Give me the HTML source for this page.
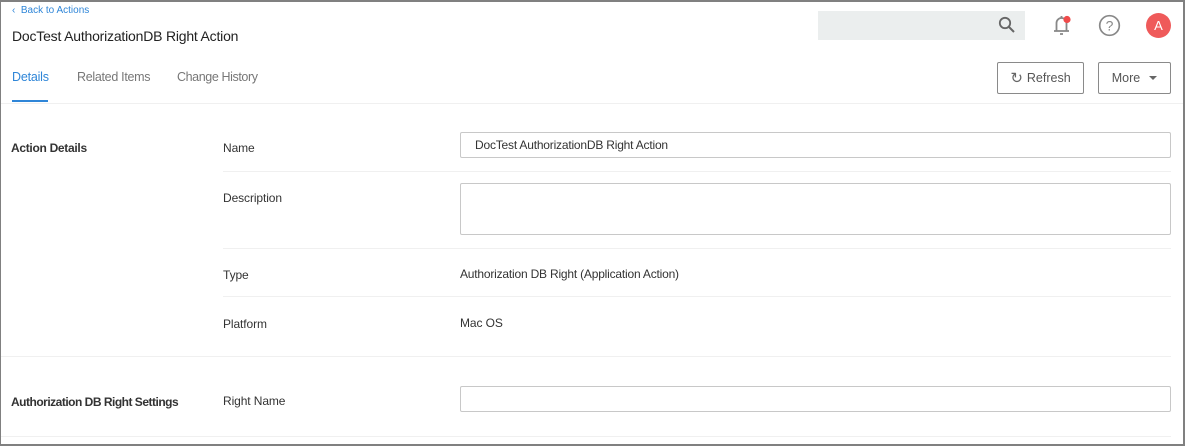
<!DOCTYPE html>
<html><head><style>
*{box-sizing:border-box;margin:0;padding:0}
body{width:1185px;height:446px;background:#fff;font-family:"Liberation Sans",sans-serif;color:#333;position:relative;overflow:hidden}
.frame{position:absolute;left:0;top:0;width:1185px;height:446px;border:1px solid #808080;border-top:2px solid #808080;border-right:2px solid #808080;border-bottom:2px solid #808080;z-index:5;pointer-events:none}
.a{position:absolute;white-space:nowrap}
.hr{position:absolute;height:1px;background:#f0f0f0}
.lbl{font-size:12px;color:#333;letter-spacing:-0.1px}
.inp{position:absolute;border:1px solid #c8c8c8;border-radius:2px;background:#fff}
.btn{position:absolute;border:1px solid #8a8a8a;border-radius:2px;font-size:12.5px;color:#555;display:flex;align-items:center;justify-content:center}
</style></head><body>
<div class="frame"></div>
<div class="a" style="left:12px;top:5px;font-size:10px;color:#2f86d8">‹&nbsp; Back to Actions</div>
<div class="a" style="left:12px;top:28px;font-size:14px;color:#222;letter-spacing:-0.2px">DocTest AuthorizationDB Right Action</div>
<div class="a" style="left:12px;top:70px;font-size:12.5px;color:#2f86d8;letter-spacing:-0.2px">Details</div>
<div class="a" style="left:12px;top:100px;width:36px;height:2px;background:#2f86d8"></div>
<div class="a" style="left:77px;top:70px;font-size:12.5px;color:#777;letter-spacing:-0.3px">Related Items</div>
<div class="a" style="left:177px;top:70px;font-size:12.5px;color:#777;letter-spacing:-0.4px">Change History</div>
<div class="hr" style="left:0;top:103px;width:1183px"></div>
<div class="a" style="left:818px;top:11px;width:207px;height:29px;background:#ebeeee"></div>
<svg class="a" style="left:998px;top:16px" width="18" height="18" viewBox="0 0 18 18"><circle cx="7" cy="7" r="5.2" fill="none" stroke="#666" stroke-width="1.8"/><line x1="11" y1="11" x2="16" y2="16" stroke="#666" stroke-width="2"/></svg>
<svg class="a" style="left:1050px;top:13px" width="24" height="24" viewBox="0 0 24 24"><path d="M4 18h15M6.5 18V10a5 5 0 0 1 10 0v8M10 21h3M11.5 3v2" fill="none" stroke="#888" stroke-width="1.8"/><circle cx="17" cy="6.5" r="3.6" fill="#ef4b4b"/></svg>
<svg class="a" style="left:1098px;top:14px" width="23" height="23" viewBox="0 0 23 23"><circle cx="11.5" cy="11.5" r="9.8" fill="none" stroke="#888" stroke-width="1.7"/><text x="11.5" y="16.5" font-size="14" text-anchor="middle" fill="#888" font-family="Liberation Sans">?</text></svg>
<div class="a" style="left:1146px;top:13px;width:25px;height:25px;border-radius:50%;background:#ef5a5a;color:#fff;font-size:13px;text-align:center;line-height:25px">A</div>
<div class="btn" style="left:997px;top:62px;width:87px;height:32px"><span style="font-size:15px;margin-right:4px;color:#666">↻</span>Refresh</div>
<div class="btn" style="left:1098px;top:62px;width:73px;height:32px">More <span style="display:inline-block;margin-left:9px;border-left:4px solid transparent;border-right:4px solid transparent;border-top:4px solid #666"></span></div>
<div class="a" style="left:11px;top:141px;font-size:12px;font-weight:bold;color:#333;letter-spacing:-0.3px">Action Details</div>
<div class="a lbl" style="left:223px;top:141px">Name</div>
<div class="inp" style="left:460px;top:132px;width:711px;height:26px"><span style="position:absolute;left:14px;top:5px;font-size:12px;color:#333;letter-spacing:-0.2px">DocTest AuthorizationDB Right Action</span></div>
<div class="hr" style="left:223px;top:171px;width:948px"></div>
<div class="a lbl" style="left:223px;top:191px">Description</div>
<div class="inp" style="left:460px;top:183px;width:711px;height:52px"></div>
<div class="hr" style="left:223px;top:248px;width:948px"></div>
<div class="a lbl" style="left:223px;top:268px">Type</div>
<div class="a lbl" style="left:460px;top:267px;letter-spacing:-0.2px">Authorization DB Right (Application Action)</div>
<div class="hr" style="left:223px;top:296px;width:948px"></div>
<div class="a lbl" style="left:223px;top:317px">Platform</div>
<div class="a lbl" style="left:460px;top:316px">Mac OS</div>
<div class="hr" style="left:0;top:356px;width:1171px"></div>
<div class="a" style="left:11px;top:395px;font-size:12px;font-weight:bold;color:#333;letter-spacing:-0.5px">Authorization DB Right Settings</div>
<div class="a lbl" style="left:223px;top:394px">Right Name</div>
<div class="inp" style="left:460px;top:386px;width:711px;height:26px"></div>
<div class="hr" style="left:0;top:436px;width:1171px"></div>
</body></html>
